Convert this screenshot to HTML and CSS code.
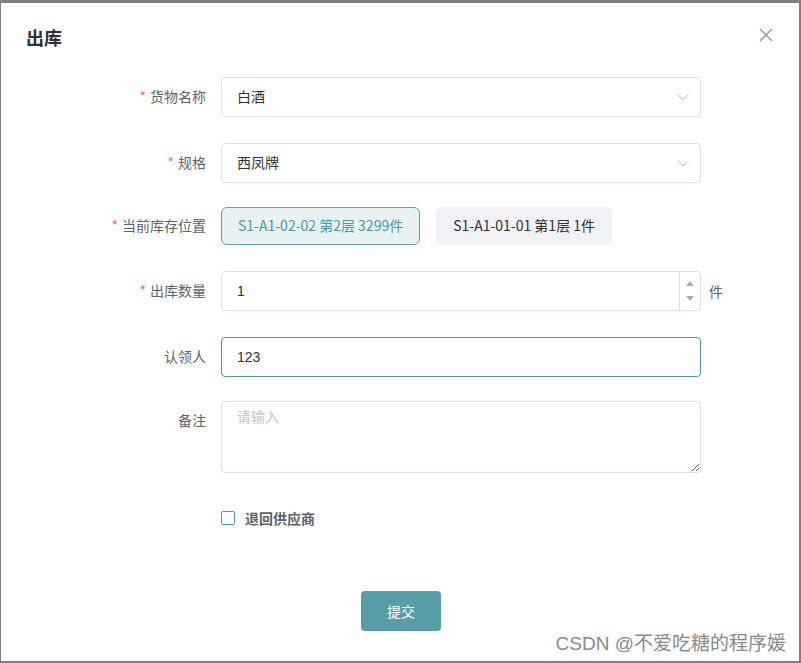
FILE: index.html
```html
<!DOCTYPE html>
<html lang="zh-CN">
<head>
<meta charset="utf-8">
<title>出库</title>
<link rel="stylesheet" href="styles.css">
</head>
<body>
<div class="dialog">
  <div class="dialog-header">
    <span class="title">出库</span>
    <button class="close" type="button" aria-label="关闭">
      <svg width="14" height="14" viewBox="0 0 14 14"><path d="M1 1 L13 13 M13 1 L1 13" stroke="#909399" stroke-width="1.3" fill="none"/></svg>
    </button>
  </div>
  <div class="dialog-body">
    <div class="form">
      <div class="form-item">
        <label class="label"><span class="star">*</span>货物名称</label>
        <div class="content">
          <div class="select">
            <span class="value">白酒</span>
            <svg class="chev" width="12" height="7" viewBox="0 0 12 7"><path d="M0.5 0.5 L6 6 L11.5 0.5" stroke="#c0c4cc" stroke-width="1" fill="none"/></svg>
          </div>
        </div>
      </div>
      <div class="form-item tight">
        <label class="label"><span class="star">*</span>规格</label>
        <div class="content">
          <div class="select">
            <span class="value">西凤牌</span>
            <svg class="chev" width="12" height="7" viewBox="0 0 12 7"><path d="M0.5 0.5 L6 6 L11.5 0.5" stroke="#c0c4cc" stroke-width="1" fill="none"/></svg>
          </div>
        </div>
      </div>
      <div class="form-item short">
        <label class="label label-short"><span class="star">*</span>当前库存位置</label>
        <div class="content chips">
          <button class="chip active" type="button">S1-A1-02-02 第2层 3299件</button>
          <button class="chip" type="button">S1-A1-01-01 第1层 1件</button>
        </div>
      </div>
      <div class="form-item">
        <label class="label"><span class="star">*</span>出库数量</label>
        <div class="content row">
          <div class="number">
            <span class="value">1</span>
            <div class="spin">
              <span class="spin-btn up"><svg width="8" height="5" viewBox="0 0 8 5"><path d="M0 5 L4 0 L8 5 Z" fill="#a8abb2"/></svg></span>
              <span class="spin-btn down"><svg width="8" height="5" viewBox="0 0 8 5"><path d="M0 0 L8 0 L4 5 Z" fill="#a8abb2"/></svg></span>
            </div>
          </div>
          <span class="unit">件</span>
        </div>
      </div>
      <div class="form-item tight">
        <label class="label">认领人</label>
        <div class="content">
          <div class="input focused"><span class="value">123</span></div>
        </div>
      </div>
      <div class="form-item">
        <label class="label">备注</label>
        <div class="content">
          <textarea class="textarea" placeholder="请输入"></textarea>
        </div>
      </div>
      <div class="form-item last">
        <label class="label"></label>
        <div class="content check-row">
          <span class="checkbox"></span>
          <span class="check-label">退回供应商</span>
        </div>
      </div>
    </div>
  </div>
  <div class="dialog-footer">
    <button class="submit" type="button">提交</button>
  </div>
  <div class="watermark">CSDN @不爱吃糖的程序媛</div>
</div>
</body>
</html>
```

FILE: styles.css
```css
* { box-sizing: border-box; }
html, body { margin: 0; padding: 0; }
body {
  background: #7f7f7f;
  font-family: "Noto Sans CJK SC", "Noto Sans", sans-serif;
  width: 801px;
  height: 663px;
  overflow: hidden;
}
.dialog {
  position: relative;
  margin: 3px 2px 2px 1px;
  width: 798px;
  height: 658px;
  background: #fff;
}
.dialog-header {
  display: flex;
  justify-content: space-between;
  align-items: flex-start;
  padding: 22px 26px 2px 25px;
}
.title {
  font-size: 18px;
  line-height: 24px;
  font-weight: bold;
  color: #303133;
}
.close {
  border: 0;
  background: none;
  padding: 0;
  margin-top: 3px;
  width: 14px;
  height: 14px;
  display: block;
}
.close svg { display: block; }
.dialog-body { padding-top: 26px; padding-left: 68px; }
.form { display: flex; flex-direction: column; }
.form-item { display: flex; margin-bottom: 26px; }
.form-item.tight { margin-bottom: 24px; }
.form-item.last { margin-bottom: 0; }
.label {
  width: 152px;
  flex: none;
  padding-right: 15px;
  text-align: right;
  font-size: 14px;
  line-height: 39px;
  color: #606266;
}
.label-short { line-height: 37px; }
.star { color: #f56c6c; margin-right: 4px; }
.content { flex: none; }
.select, .input, .number {
  width: 480px;
  height: 40px;
  border: 1px solid #dcdfe6;
  border-radius: 4px;
  display: flex;
  align-items: center;
  padding: 0 15px;
  font-size: 14px;
  color: #303133;
}
.select { padding-bottom: 2px; }
.value { flex: 1; font-family: "Liberation Sans", "Noto Sans CJK SC", sans-serif; }
.select .value { font-family: "Noto Sans CJK SC", sans-serif; }
.chev { display: block; margin-right: -4px; margin-top: 2px; }
.input.focused { border-color: #4f9ba3; }
.chips { display: flex; gap: 16px; height: 38px; }
.chip {
  height: 38px;
  padding: 0 16px 1px;
  border: 1px solid #f0f2f6;
  border-radius: 6px;
  background: #f0f2f6;
  color: #303133;
  font-family: "Noto Sans CJK SC", sans-serif;
  font-size: 14px;
  line-height: 35px;
}
.chip.active {
  background: #e8f2f3;
  border-color: #5c9fa7;
  color: #4b98a1;
}
.row { display: flex; align-items: center; }
.number { position: relative; padding-right: 0; }
.spin {
  width: 21px;
  height: 38px;
  border-left: 1px solid #dcdfe6;
  display: flex;
  flex-direction: column;
}
.spin-btn {
  flex: 1;
  display: flex;
  justify-content: center;
}
.spin-btn.up { align-items: flex-end; padding-bottom: 5px; }
.spin-btn.down { align-items: flex-start; padding-top: 5px; }
.spin-btn svg { display: block; }
.unit { margin-left: 8px; font-size: 14px; color: #606266; }
.textarea {
  display: block;
  width: 480px;
  height: 72px;
  border: 1px solid #dcdfe6;
  border-radius: 4px;
  padding: 4px 15px;
  font-family: "Noto Sans CJK SC", sans-serif;
  font-size: 14px;
  line-height: 21px;
  color: #303133;
  resize: vertical;
  outline: none;
}
.textarea::placeholder { color: #c0c4cc; }
.check-row { display: flex; align-items: center; height: 40px; padding-bottom: 2px; }
.checkbox {
  width: 14px;
  height: 14px;
  border: 1px solid #5a9ca5;
  border-radius: 2px;
  background: #fff;
}
.check-label {
  margin-left: 10px;
  font-size: 14px;
  font-weight: bold;
  color: #606266;
}
.dialog-footer {
  display: flex;
  justify-content: center;
  padding: 52px 0 30px;
}
.submit {
  width: 80px;
  height: 40px;
  border: 0;
  border-radius: 4px;
  background: #579fa8;
  color: #fff;
  font-family: "Noto Sans CJK SC", sans-serif;
  font-size: 14px;
  margin-left: 2px;
}
.watermark {
  position: absolute;
  right: 13px;
  bottom: 5px;
  font-family: "Liberation Sans", "Noto Sans CJK SC", sans-serif;
  font-size: 19px;
  line-height: 25px;
  color: #8a8a8a;
  text-shadow: 0 0 2px #fff;
  white-space: nowrap;
}
```
